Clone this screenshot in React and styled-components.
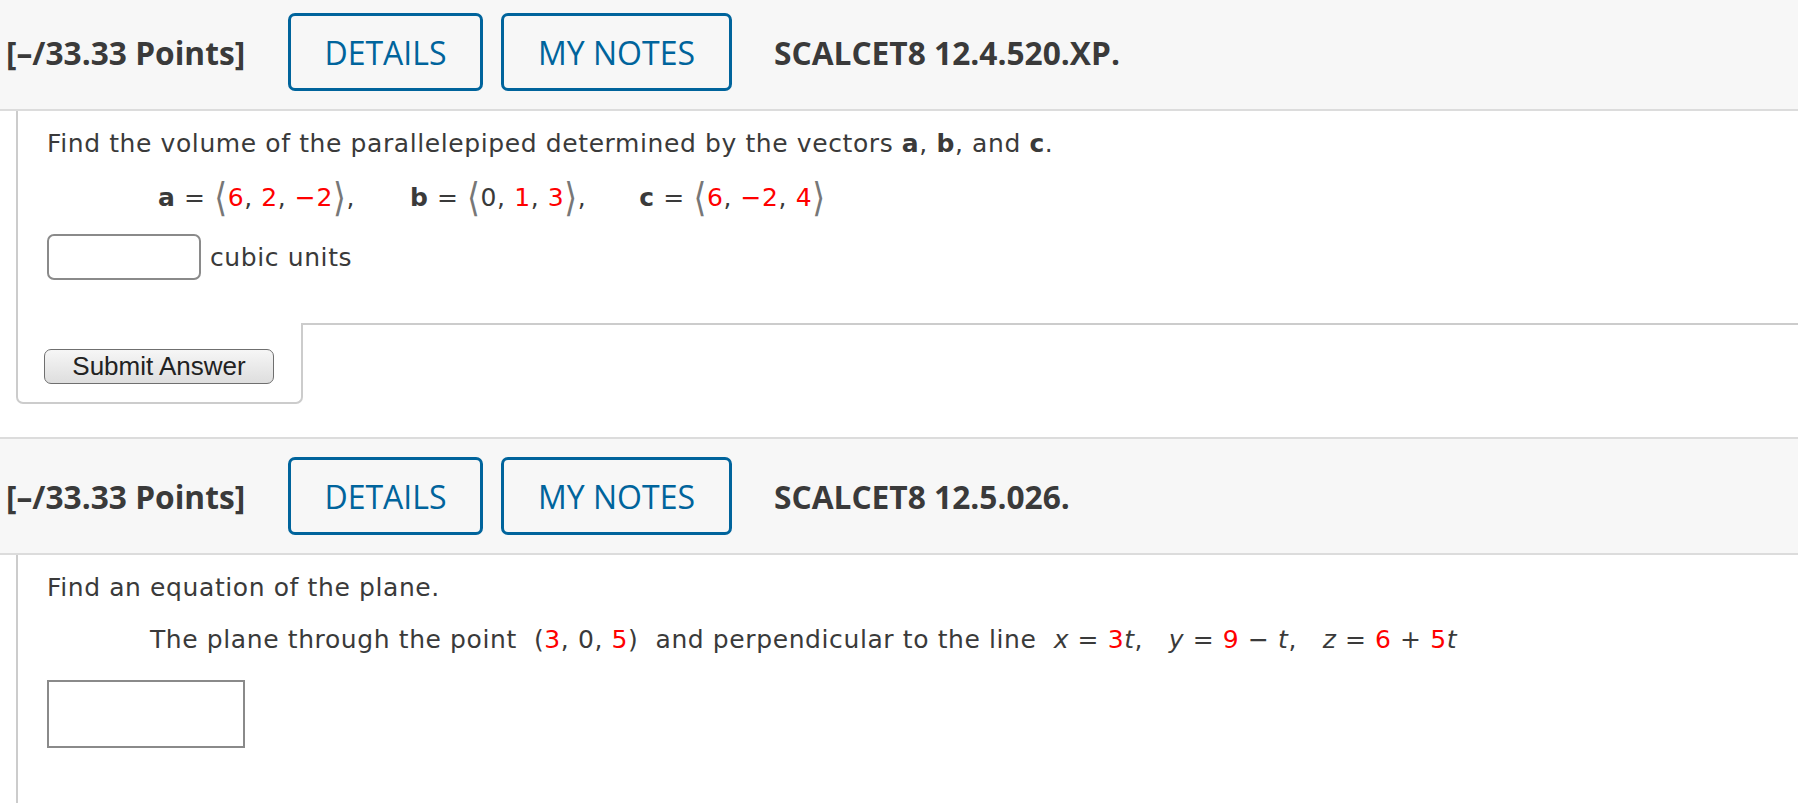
import React from 'react';
import styled, { createGlobalStyle } from 'styled-components';

const GlobalStyle = createGlobalStyle`
    html, body {
        margin: 0;
        padding: 0;
        background: #ffffff;
    }
    body {
        font-family: "DejaVu Sans", Verdana, sans-serif;
        color: #3a3a3a;
    }
`;

const Page = styled.div`
    width: 1798px;
    min-height: 803px;
    overflow: hidden;
`;

const Header = styled.div`
    display: flex;
    align-items: center;
    background-color: #f7f7f7;
    border-bottom: 2px solid #dcdcdc;
    border-top: ${props => (props.first ? 'none' : '2px solid #dcdcdc')};
    padding: ${props => (props.first ? '13px' : '18px')} 6px 18px 6px;
    font-family: "Open Sans", "DejaVu Sans", sans-serif;
`;

const Points = styled.div`
    width: 282px;
    flex-shrink: 0;
    font-size: 31.7px;
    font-weight: 700;
    color: #3a3a3a;
    white-space: nowrap;
`;

const HeaderButton = styled.button`
    box-sizing: border-box;
    width: ${props => props.w}px;
    height: 78px;
    margin-right: ${props => props.gap}px;
    background: transparent;
    border: 3px solid #00649c;
    border-radius: 7px;
    color: #00649c;
    font-family: "Open Sans", "DejaVu Sans", sans-serif;
    font-size: 32px;
    font-weight: 400;
    padding: 0;
    cursor: pointer;
`;

const Code = styled.div`
    font-size: 31.7px;
    font-weight: 700;
    color: #3a3a3a;
    white-space: nowrap;
`;

const Body = styled.div`
    margin-left: 16px;
    margin-bottom: ${props => props.mb || 0}px;
    min-height: ${props => props.minH || 0}px;
    display: flex;
    flex-direction: column;
`;

const Content = styled.div`
    border-left: 2px solid #cccccc;
    padding: 16px 0 0 29px;
    flex: 1;
    font-size: 25px;
    letter-spacing: 0.6px;
`;

const Para = styled.div`
    line-height: 34px;
    margin-top: ${props => props.mt || 0}px;
    padding-left: ${props => props.indent || 0}px;
    white-space: nowrap;
`;

const VectorRow = styled.div`
    display: flex;
    align-items: center;
    height: 40px;
    margin-top: 16px;
    padding-left: 111px;
`;

const Vector = styled.span`
    margin-right: ${props => props.gap}px;
    white-space: nowrap;
`;

const Bold = styled.b`
    font-weight: 700;
`;

const Red = styled.span`
    color: #ff0000;
`;

const Angle = styled.span`
    color: #777777;
    font-size: 33px;
    vertical-align: -3px;
    transform: scaleY(1.2);
    display: inline-block;
`;

const Var = styled.i`
    font-style: italic;
`;

const AnswerRow = styled.div`
    display: flex;
    align-items: center;
    margin-top: ${props => props.mt}px;
    margin-bottom: ${props => props.mb || 0}px;
`;

const AnswerInput = styled.input`
    box-sizing: border-box;
    width: ${props => props.w}px;
    height: ${props => props.h}px;
    border: 2px solid #8a8a8a;
    border-radius: ${props => props.r || 0}px;
    background: #ffffff;
    margin: 0;
    outline: none;
`;

const Unit = styled.span`
    margin-left: 9px;
`;

const Footer = styled.div`
    display: flex;
`;

const SubmitCell = styled.div`
    box-sizing: border-box;
    width: 287px;
    border-left: 2px solid #cccccc;
    border-right: 2px solid #cccccc;
    border-bottom: 2px solid #cccccc;
    border-radius: 0 0 7px 7px;
    padding: 26px 0 18px 26px;
`;

const Filler = styled.div`
    flex: 1;
    border-top: 2px solid #cccccc;
`;

const SubmitButton = styled.button`
    box-sizing: border-box;
    width: 230px;
    height: 35px;
    border: 1.5px solid #6f6f6f;
    border-radius: 7px;
    background: linear-gradient(#f6f6f6, #dedede);
    font-family: "Liberation Sans", Arial, sans-serif;
    font-size: 26px;
    color: #222222;
    padding: 0;
    cursor: pointer;
`;

const QuestionHeader = ({ first, code }) => (
    <Header first={first}>
        <Points>[–/33.33 Points]</Points>
        <HeaderButton w={195} gap={18}>DETAILS</HeaderButton>
        <HeaderButton w={231} gap={42}>MY NOTES</HeaderButton>
        <Code>{code}</Code>
    </Header>
);

const L = () => <Angle>⟨</Angle>;
const R = () => <Angle>⟩</Angle>;

export default function App() {
    return (
        <Page>
            <GlobalStyle />
            <QuestionHeader first code="SCALCET8 12.4.520.XP." />
            <Body mb={33}>
                <Content>
                    <Para>
                        Find the volume of the parallelepiped determined by the vectors <Bold>a</Bold>, <Bold>b</Bold>, and <Bold>c</Bold>.
                    </Para>
                    <VectorRow>
                        <Vector gap={55}>
                            <Bold>a</Bold> = <L /><Red>6</Red>, <Red>2</Red>, <Red>−2</Red><R />,
                        </Vector>
                        <Vector gap={53}>
                            <Bold>b</Bold> = <L />0, <Red>1</Red>, <Red>3</Red><R />,
                        </Vector>
                        <Vector gap={0}>
                            <Bold>c</Bold> = <L /><Red>6</Red>, <Red>−2</Red>, <Red>4</Red><R />
                        </Vector>
                    </VectorRow>
                    <AnswerRow mt={17} mb={43}>
                        <AnswerInput w={154} h={46} r={7} />
                        <Unit>cubic units</Unit>
                    </AnswerRow>
                </Content>
                <Footer>
                    <SubmitCell>
                        <SubmitButton>Submit Answer</SubmitButton>
                    </SubmitCell>
                    <Filler />
                </Footer>
            </Body>
            <QuestionHeader code="SCALCET8 12.5.026." />
            <Body minH={260}>
                <Content>
                    <Para>Find an equation of the plane.</Para>
                    <Para mt={18} indent={103}>
                        The plane through the point&nbsp; (<Red>3</Red>, 0, <Red>5</Red>)&nbsp; and perpendicular to the line&nbsp; <Var>x</Var> = <Red>3</Red><Var>t</Var>,&nbsp;&nbsp; <Var>y</Var> = <Red>9</Red> − <Var>t</Var>,&nbsp;&nbsp; <Var>z</Var> = <Red>6</Red> + <Red>5</Red><Var>t</Var>
                    </Para>
                    <AnswerRow mt={23}>
                        <AnswerInput w={198} h={68} />
                    </AnswerRow>
                </Content>
            </Body>
        </Page>
    );
}
